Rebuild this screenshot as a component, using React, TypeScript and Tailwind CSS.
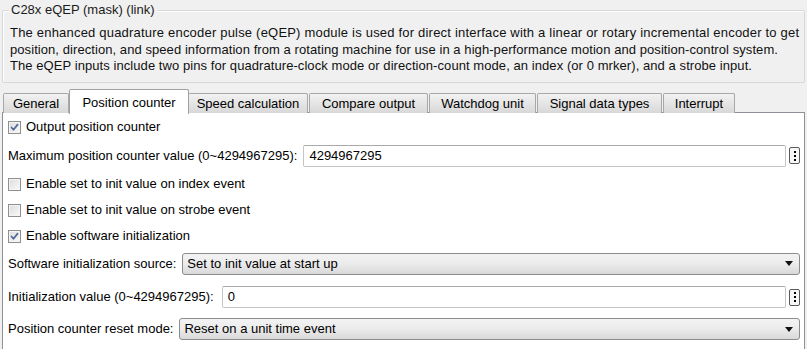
import React from "react";

const FONT = { fontFamily: '"Liberation Sans", Arial, sans-serif' };

function CheckBox({ checked }: { checked: boolean }) {
  return (
    <div className="w-[13px] h-[13px] border border-[#8e8f8f] bg-gradient-to-br from-[#dcdcdc] to-[#fafafa] flex items-center justify-center shrink-0">
      <div className="w-[11px] h-[11px] border border-[#f4f4f4] flex items-center justify-center">
        {checked && (
          <svg width="9" height="9" viewBox="0 0 9 9">
            <path d="M1.5 4.5 L3.5 6.8 L7.6 1.6" stroke="#4f6a99" strokeWidth="1.7" fill="none" strokeLinecap="round" strokeLinejoin="round" />
          </svg>
        )}
      </div>
    </div>
  );
}

function MoreBtn() {
  return (
    <div className="w-[11px] h-[17px] border border-[#5a5a5a] rounded-[2px] bg-[#f7f7f7] flex flex-col items-center justify-center gap-[2px] shrink-0">
      <div className="w-[2px] h-[2px] bg-black" />
      <div className="w-[2px] h-[2px] bg-black" />
      <div className="w-[2px] h-[2px] bg-black" />
    </div>
  );
}

function TextField({ value }: { value: string }) {
  return (
    <div className="flex-1 h-[22px] border border-[#c5c5c5] border-t-[#a9a9a9] rounded-[2px] bg-white flex items-center pl-[5px] text-[13px]">
      {value}
    </div>
  );
}

function Select({ value }: { value: string }) {
  return (
    <div className="flex-1 h-[22px] border border-[#8c8c8c] rounded-[3px] bg-gradient-to-b from-[#f3f3f3] via-[#ebebeb] to-[#d9d9d9] flex items-center pl-[4px] pr-[6px] text-[13px]">
      <span className="flex-1">{value}</span>
      <svg width="8" height="5" viewBox="0 0 8 5">
        <path d="M0 0 H8 L4 5 Z" fill="#111" />
      </svg>
    </div>
  );
}

const tabs = [
  { label: "General", w: 66 },
  { label: "Position counter", w: 120, active: true },
  { label: "Speed calculation", w: 120 },
  { label: "Compare output", w: 119 },
  { label: "Watchdog unit", w: 107 },
  { label: "Signal data types", w: 125 },
  { label: "Interrupt", w: 72 },
];

export default function App() {
  return (
    <div className="w-[807px] h-[349px] bg-[#f0f0f0] text-black text-[13px] overflow-hidden" style={FONT}>
      <div className="pt-[10px] px-[2px]">
        <div className="relative h-[73px] border border-[#d8d8d8] rounded-[2px] shadow-[inset_1px_1px_0_#ffffff]">
          <div className="absolute left-[6px] -top-[9px] px-[2px] bg-[#f0f0f0] leading-[16px] text-[13px] text-[#1a1a1a]">
            C28x eQEP (mask) (link)
          </div>
          <div className="pt-[14px] pl-[7px] pr-[2px] leading-[16.5px] text-[13px] text-[#111] tracking-[0.07px] whitespace-nowrap">
            <div className="tracking-[0.2px]">
              The enhanced quadrature encoder pulse (eQEP) module is used for direct interface with a linear or rotary incremental encoder to get
            </div>
            <div>
              position, direction, and speed information from a rotating machine for use in a high-performance motion and position-control system.
            </div>
            <div>
              The eQEP inputs include two pins for quadrature-clock mode or direction-count mode, an index (or 0 mrker), and a strobe input.
            </div>
          </div>
        </div>
      </div>

      <div className="mt-[6px] flex items-end h-[24px] pl-[3px] relative z-10">
        {tabs.map((t) =>
          t.active ? (
            <div
              key={t.label}
              style={{ width: t.w }}
              className="h-[25px] -mx-[1px] mb-[-1px] bg-white border border-b-0 border-[#a0a0a0] rounded-t-[2px] flex items-start justify-center pt-[3px] text-[13px] relative z-10"
            >
              {t.label}
            </div>
          ) : (
            <div
              key={t.label}
              style={{ width: t.w }}
              className="h-[20px] bg-gradient-to-b from-[#f2f2f2] to-[#d8d8d8] border border-b-0 border-[#a8a8a8] rounded-t-[2px] flex items-center justify-center text-[13px] mr-[1px]"
            >
              {t.label}
            </div>
          )
        )}
      </div>

      <div className="mx-[2px] -mt-px h-[240px] bg-white border border-[#8e9197] border-b-0 text-[13px]">
        <div className="h-[28px] flex items-center pl-[5px] gap-[5px]">
          <CheckBox checked />
          <span>Output position counter</span>
        </div>
        <div className="h-[29px] flex items-center pl-[5px] pr-[4px]">
          <span className="mr-[6px]">Maximum position counter value (0~4294967295):</span>
          <TextField value="4294967295" />
          <div className="ml-[3px]"><MoreBtn /></div>
        </div>
        <div className="h-[28px] flex items-center pl-[5px] gap-[5px]">
          <CheckBox checked={false} />
          <span>Enable set to init value on index event</span>
        </div>
        <div className="h-[24px] flex items-center pl-[5px] gap-[5px]">
          <CheckBox checked={false} />
          <span>Enable set to init value on strobe event</span>
        </div>
        <div className="h-[28px] flex items-center pl-[5px] gap-[5px]">
          <CheckBox checked />
          <span>Enable software initialization</span>
        </div>
        <div className="h-[27px] flex items-center pl-[5px] pr-[4px]">
          <span className="mr-[6px]">Software initialization source:</span>
          <Select value="Set to init value at start up" />
        </div>
        <div className="h-[40px] flex items-center pl-[5px] pr-[4px]">
          <span className="mr-[8px]">Initialization value (0~4294967295):</span>
          <TextField value="0" />
          <div className="ml-[3px]"><MoreBtn /></div>
        </div>
        <div className="h-[24px] flex items-center pl-[5px] pr-[4px]">
          <span className="mr-[6px]">Position counter reset mode:</span>
          <Select value="Reset on a unit time event" />
        </div>
      </div>
    </div>
  );
}
